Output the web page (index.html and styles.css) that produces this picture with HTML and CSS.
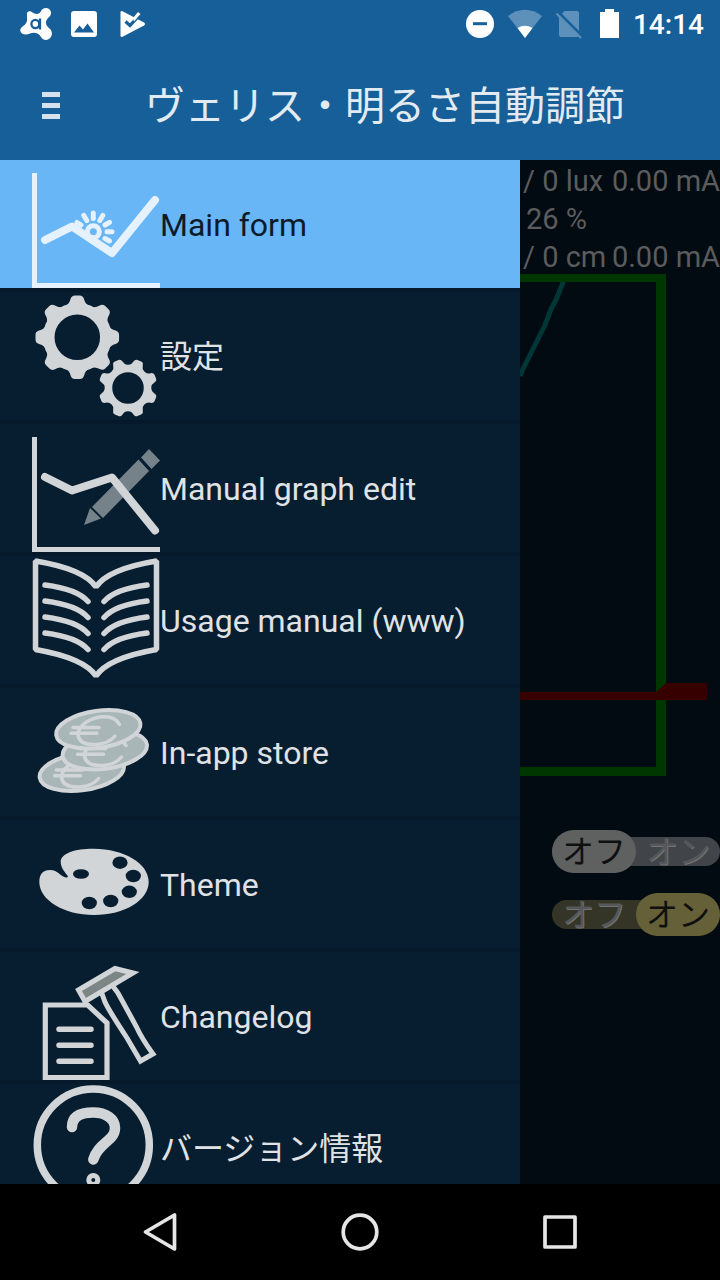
FILE: index.html
```html
<!DOCTYPE html>
<html lang="ja">
<head>
<meta charset="utf-8">
<meta name="viewport" content="width=device-width, initial-scale=1">
<title>ヴェリス・明るさ自動調節</title>
<link rel="stylesheet" href="styles.css">
</head>
<body class="screen">
<div class="status-bar">
  <div class="status-group status-notices">
    <svg class="notice-icon" viewBox="0 0 32 48" aria-hidden="true">
      <path fill="#fff" d="M7 13.500C7.500 10.500 10.500 10.800 12.500 12.500C15 14.500 19 14.500 20.500 12C21.500 9.500 23.500 8 26 8C29 8 31.300 10.500 31 13.500C30.600 17 26.500 18 26 22C25.800 25 27 26.500 29.500 28.500C32.500 31 32.500 35 30.500 37.500C28 41 23 40.500 21 37C18.500 32.500 14 32 10 33.500C6 35.500 1.500 34.500 .5 31.500C-.5 28 3 26.500 5 24.500C8.500 20.500 6.500 17.500 7 13.500Z"/>
      <ellipse cx="15.300" cy="24" rx="3.900" ry="4.100" fill="none" stroke="#175f98" stroke-width="2.300"/>
      <path d="M20 18.500V29.500" stroke="#175f98" stroke-width="2.300"/>
    </svg>
    <svg class="notice-icon" viewBox="0 0 32 48" aria-hidden="true">
      <rect x="3" y="11" width="26" height="26" rx="3" fill="#fff"/>
      <path fill="#175f98" d="M6 32.500L11.500 25.500L15 29.500L19.500 23.500L26 32.500Z"/>
    </svg>
    <svg class="notice-icon" viewBox="0 0 32 48" aria-hidden="true">
      <path fill="#fff" d="M4.500 12.500Q4.500 10.500 6.500 11.200L28 22.500Q30 24 28 25.500L6.500 36.800Q4.500 37.500 4.500 35.500Z"/>
      <path d="M9.500 21.500L14 25.500L25 13.500" fill="none" stroke="#175f98" stroke-width="3.200"/>
      <path d="M17 18L22 12L24.500 14L18 21.500Z" fill="#fff"/>
    </svg>
  </div>
  <div class="status-group status-system">
    <svg class="system-icon" viewBox="0 0 40 48" aria-hidden="true">
      <circle cx="23" cy="24" r="14" fill="#fff"/>
      <path d="M16 23.700H30" stroke="#175f98" stroke-width="3"/>
    </svg>
    <svg class="system-icon" viewBox="0 0 40 48" aria-hidden="true">
      <path d="M7 16Q24 3.500 41 16L24 38Z" fill="#5d90ba"/>
      <path d="M16.500 28Q24 23.500 31.500 28L24 38Z" fill="#fff"/>
    </svg>
    <svg class="system-icon" viewBox="0 0 40 48" aria-hidden="true">
      <path d="M19.500 11H32Q34 11 34 13V35Q34 37 32 37H16Q14 37 14 35V17Z" fill="#5d90ba"/>
      <path d="M13 12L38 37" stroke="#175f98" stroke-width="3"/>
      <path d="M11.500 13.500L36 38" stroke="#5d90ba" stroke-width="2.200"/>
    </svg>
    <svg class="system-icon" viewBox="0 0 40 48" aria-hidden="true">
      <path d="M11 12H16V9H25V12H30V38H11Z" fill="#fff"/>
    </svg>
    <time class="clock">14:14</time>
  </div>
</div>

<header class="app-bar">
  <button class="menu-button" type="button" aria-label="Menu">
    <span class="menu-line"></span><span class="menu-line"></span><span class="menu-line"></span>
  </button>
  <h1 class="app-title">ヴェリス・明るさ自動調節</h1>
</header>

<div class="content">
  <nav class="drawer">
    <a class="item item-active" href="#main">
      <svg class="item-icon" viewBox="0 0 128 128" aria-hidden="true">
        <path class="line" stroke-width="5" d="M2.500 13V125.500H128"/>
        <path class="line round" stroke-width="8" d="M13 80L40 66.500L80 93L123 40"/>
        <circle class="line" cx="61.300" cy="71.700" r="6" stroke-width="5"/>
        <path class="line round" stroke-width="5" d="M61.300 53V58.500M51.800 55.500L54.800 60.500M70.800 55.500L67.800 60.500M45 62.500L49 65M77.500 62.300L73 65M80 71.700H75M77.500 81L73 78.500"/>
      </svg>
      <span class="item-label">Main form</span>
    </a>
    <a class="item" href="#settings">
      <svg class="item-icon" viewBox="0 0 128 128" aria-hidden="true">
        <circle class="line" cx="45.300" cy="45.300" r="28.500" stroke-width="11.500"/>
        <g class="solid">
          <path id="tooth" d="M33 14Q37.500 12 38.500 7Q39.500 3.500 43 3.500H47.600Q51 3.500 52 7Q53 12 57.500 14L54 19H37Z"/>
          <use href="#tooth" transform="rotate(45 45.300 45.300)"/>
          <use href="#tooth" transform="rotate(90 45.300 45.300)"/>
          <use href="#tooth" transform="rotate(135 45.300 45.300)"/>
          <use href="#tooth" transform="rotate(180 45.300 45.300)"/>
          <use href="#tooth" transform="rotate(225 45.300 45.300)"/>
          <use href="#tooth" transform="rotate(270 45.300 45.300)"/>
          <use href="#tooth" transform="rotate(315 45.300 45.300)"/>
        </g>
        <circle class="line" cx="96" cy="96" r="19.500" stroke-width="7.500"/>
        <g class="solid">
          <path id="cog" transform="rotate(22.500 96 96)" d="M87.500 74.500Q90.500 73 91 69.500Q91.500 66.500 94 66.500H98Q100.500 66.500 101 69.500Q101.500 73 104.500 74.500L102 78H90Z"/>
          <use href="#cog" transform="rotate(45 96 96)"/>
          <use href="#cog" transform="rotate(90 96 96)"/>
          <use href="#cog" transform="rotate(135 96 96)"/>
          <use href="#cog" transform="rotate(180 96 96)"/>
          <use href="#cog" transform="rotate(225 96 96)"/>
          <use href="#cog" transform="rotate(270 96 96)"/>
          <use href="#cog" transform="rotate(315 96 96)"/>
        </g>
      </svg>
      <span class="item-label">設定</span>
    </a>
    <a class="item" href="#graph">
      <svg class="item-icon" viewBox="0 0 128 128" aria-hidden="true">
        <path fill="#76828a" d="M52 101L58 84L69 94.500ZM60 83L71 94L117 47L106.500 35.500ZM109 33.500L117 25L128 36.500L119.500 45Z"/>
        <path class="line" stroke-width="5" d="M2.500 13V125.500H128"/>
        <path class="line round" stroke-width="8" d="M13 53L40 66.500L80 53.500L123 106.500"/>
      </svg>
      <span class="item-label">Manual graph edit</span>
    </a>
    <a class="item" href="#manual">
      <svg class="item-icon" viewBox="0 0 128 128" aria-hidden="true">
        <path class="line" stroke-width="5.500" stroke-linejoin="bevel" d="M3.500 5Q52 13 64 31Q76 13 124.500 5V93.500Q76 102 64 120Q52 102 3.500 93.500Z"/>
        <path class="line round" stroke-width="5.500" d="M13 29Q45 33 56 45.500M13 45Q45 49 56 61.500M13 61Q45 65 56 77.500M13 77Q45 81 56 93.500M115 29Q83 33 72 45.500M115 45Q83 49 72 61.500M115 61Q83 65 72 77.500M115 77Q83 81 72 93.500"/>
      </svg>
      <span class="item-label">Usage manual (www)</span>
    </a>
    <a class="item" href="#store">
      <svg class="item-icon" viewBox="0 0 128 128" aria-hidden="true">
        <g transform="translate(-16.500 42.500)">
          <g id="coin">
            <ellipse cx="66.300" cy="41.300" rx="42.500" ry="18.500" transform="rotate(-8 66.300 41.300)" fill="#a9b6b8" stroke="#d1d5d8" stroke-width="4"/>
            <path class="line round" stroke-width="3.500" d="M87.500 36.500C84 29.500 76 28 68 29C54 31 46 40 46 47C47 54 54 57 64 56.500C72 56 79 53 83 48M41 39.500H67M39 45.300H65"/>
          </g>
        </g>
        <use href="#coin" transform="translate(6.500 21)"/>
        <use href="#coin"/>
      </svg>
      <span class="item-label">In-app store</span>
    </a>
    <a class="item" href="#theme">
      <svg class="item-icon" viewBox="0 0 128 128" aria-hidden="true">
        <path class="solid" d="M62 28.700C92 29 116.700 43 116.700 62C116.700 80 93 95 62 95C32 95 7.300 80 7.300 62C7.300 54 11 50 18 50C26 50 29 57 34 57.500C36.500 57.500 36 56 35 55C32 51 28.700 47 28.700 41.700C28.700 33 44 28.500 62 28.700Z"/>
        <g fill="#071d30">
          <ellipse cx="49" cy="54" rx="8" ry="4.800"/>
          <ellipse cx="88" cy="42.700" rx="7.600" ry="6.200"/>
          <ellipse cx="101.300" cy="56" rx="7.600" ry="6.200"/>
          <ellipse cx="97.300" cy="71.800" rx="7.600" ry="6.200"/>
          <ellipse cx="78.700" cy="81" rx="7.600" ry="6.200"/>
          <ellipse cx="57.300" cy="83" rx="7.600" ry="6.200"/>
        </g>
      </svg>
      <span class="item-label">Theme</span>
    </a>
    <a class="item" href="#changelog">
      <svg class="item-icon" viewBox="0 0 128 128" aria-hidden="true">
        <path class="line" stroke-width="5.200" d="M13.300 53H55.700L75 71V125.500H13.300Z"/>
        <path class="line round" stroke-width="5.500" d="M27 77.300H59M27 93.300H59M27 109.300H59"/>
        <path class="line" stroke-width="5" d="M69.700 41L73 50Q76 57 95 86L108.500 109L121 102Q110 87 104 74L86 41L81.500 35"/>
        <path d="M46.500 38L83 16.500L101 21L53 49.500Z" fill="#7b8685" stroke="#d1d5d8" stroke-width="5"/>
      </svg>
      <span class="item-label">Changelog</span>
    </a>
    <a class="item" href="#about">
      <svg class="item-icon" viewBox="0 0 128 128" aria-hidden="true">
        <circle class="line" cx="61.300" cy="61" r="56" stroke-width="7.500"/>
        <path class="line round" stroke-width="10.500" d="M40 43C40 31.500 50 28.500 61.300 28.500C74 28.500 83 35 83 44C83 57 66 59 61.300 75.500"/>
        <circle class="line" cx="61.300" cy="96" r="4.500" stroke-width="5"/>
      </svg>
      <span class="item-label">バージョン情報</span>
    </a>
  </nav>

  <main class="panel">
    <div class="readings">
      <div class="reading"><span>/ 0 lux</span><span>0.00 mA</span></div>
      <div class="reading reading-level"><span>26 %</span></div>
      <div class="reading"><span>/ 0 cm</span><span>0.00 mA</span></div>
    </div>
    <svg class="chart" viewBox="0 0 200 502" role="img" aria-label="Graph">
      <path d="M0 102L2 97L20 61L25 51L31 35L36 26L44 6" fill="none" stroke="#003736" stroke-width="5"/>
      <path d="M0 0H146V502H0V493H136V8H0Z" fill="#003700"/>
      <path d="M0 418H136L146 409H187V426H0Z" fill="#370000"/>
    </svg>
    <div class="switches">
      <label class="switch">
        <input class="switch-input" type="checkbox" role="switch">
        <span class="switch-side switch-thumb">オフ</span><span class="switch-side">オン</span>
      </label>
      <label class="switch switch-on">
        <input class="switch-input" type="checkbox" role="switch" checked>
        <span class="switch-side">オフ</span><span class="switch-side switch-thumb">オン</span>
      </label>
    </div>
  </main>
</div>

<div class="system-nav">
  <button class="nav-button" type="button" aria-label="Back">
    <svg class="nav-icon" viewBox="0 0 48 48"><path d="M9.500 24L38.500 7V41Z"/></svg>
  </button>
  <button class="nav-button" type="button" aria-label="Home">
    <svg class="nav-icon" viewBox="0 0 48 48"><circle cx="24" cy="24" r="16.800"/></svg>
  </button>
  <button class="nav-button" type="button" aria-label="Recent apps">
    <svg class="nav-icon" viewBox="0 0 48 48"><rect x="9" y="9" width="30" height="30"/></svg>
  </button>
</div>
</body>
</html>
```

FILE: styles.css
```css
* {
  box-sizing: border-box;
}

.screen {
  display: flex;
  flex-direction: column;
  height: 100vh;
  margin: 0;
  background: #000;
  font-family: Roboto, "Noto Sans CJK JP", sans-serif;
}

.status-bar {
  display: flex;
  justify-content: space-between;
  padding: 0 16px 0 20px;
  background: #175f98;
}

.status-group {
  display: flex;
  align-items: center;
}

.status-notices {
  gap: 16px;
}

.status-system {
  gap: 4px;
}

.notice-icon {
  width: 32px;
  height: 48px;
}

.system-icon {
  width: 40px;
  height: 48px;
  overflow: visible;
}

.clock {
  padding-top: 2px;
  color: #fff;
  font-size: 28px;
  font-weight: 500;
  line-height: 32px;
}

.app-bar {
  display: flex;
  align-items: center;
  height: 112px;
  padding: 2px 42px 0;
  background: #175f98;
}

.menu-button {
  display: flex;
  flex-direction: column;
  gap: 6px;
  width: 18px;
  padding: 0;
  border: 0;
  background: none;
}

.menu-line {
  width: 100%;
  height: 5px;
  background: #d5e1ec;
}

.app-title {
  flex: 1;
  margin: 0;
  padding: 4px 0 0 32px;
  color: #e3ebf2;
  font-size: 40px;
  font-weight: 400;
  line-height: 60px;
  text-align: center;
  white-space: nowrap;
}

.content {
  display: grid;
  flex: 1;
  grid-template-columns: 13fr 5fr;
  min-height: 0;
  overflow: hidden;
}

.drawer {
  display: flex;
  flex-direction: column;
  gap: 4px;
  min-height: 0;
  overflow: hidden;
  background: #06192a;
}

.item {
  display: flex;
  flex: none;
  align-items: center;
  padding-left: 32px;
  background: #071d30;
  color: #e0e3e6;
  font-size: 32px;
  line-height: 48px;
  text-decoration: none;
}

.item-active {
  background: #69b6f7;
  color: #0d1b28;
}

.item-icon {
  flex: none;
  width: 128px;
  height: 128px;
  color: #d1d5d8;
}

.item-active .item-icon {
  color: #e5f2fe;
}

.item-label {
  padding-top: 2px;
}

.line {
  fill: none;
  stroke: currentColor;
}

.round {
  stroke-linecap: round;
  stroke-linejoin: round;
}

.solid {
  fill: currentColor;
}

.panel {
  min-width: 0;
  overflow: hidden;
  background: #020a12;
}

.readings {
  height: 114px;
  padding-top: 2px;
  color: #5b5c5d;
  font-size: 29px;
  line-height: 38px;
  white-space: nowrap;
}

.reading {
  display: flex;
  justify-content: space-between;
  padding-left: 3px;
}

.reading-level {
  padding-left: 6px;
}

.chart {
  display: block;
  width: 100%;
}

.switches {
  display: flex;
  flex-direction: column;
  gap: 20px;
  padding: 54px 0 0 32px;
}

.switch {
  display: flex;
  position: relative;
  z-index: 0;
  color: #55575a;
  font-size: 32px;
  line-height: 41px;
  text-align: center;
}

.switch::before {
  content: "";
  position: absolute;
  inset: 7px 0;
  z-index: -1;
  border-radius: 15px;
  background: #414549;
}

.switch-on::before {
  background: #343526;
}

.switch-input {
  position: absolute;
  inset: 0;
  width: 100%;
  height: 100%;
  margin: 0;
  opacity: 0;
}

.switch-side {
  flex: 1;
  padding-top: 2px;
  text-shadow: 1px 1px 0 #707274;
}

.switch-thumb {
  border-radius: 22px;
  background: #5f6060;
  color: #101010;
  text-shadow: none;
}

.switch-on .switch-thumb {
  background: #656037;
}

.system-nav {
  display: flex;
  height: 96px;
  padding: 0 60px;
  background: #000;
}

.nav-button {
  display: flex;
  flex: 1;
  align-items: center;
  justify-content: center;
  padding: 0;
  border: 0;
  background: none;
}

.nav-icon {
  width: 48px;
  height: 48px;
  fill: none;
  stroke: #e6e6e6;
  stroke-width: 3.700;
  stroke-linejoin: round;
}
```
